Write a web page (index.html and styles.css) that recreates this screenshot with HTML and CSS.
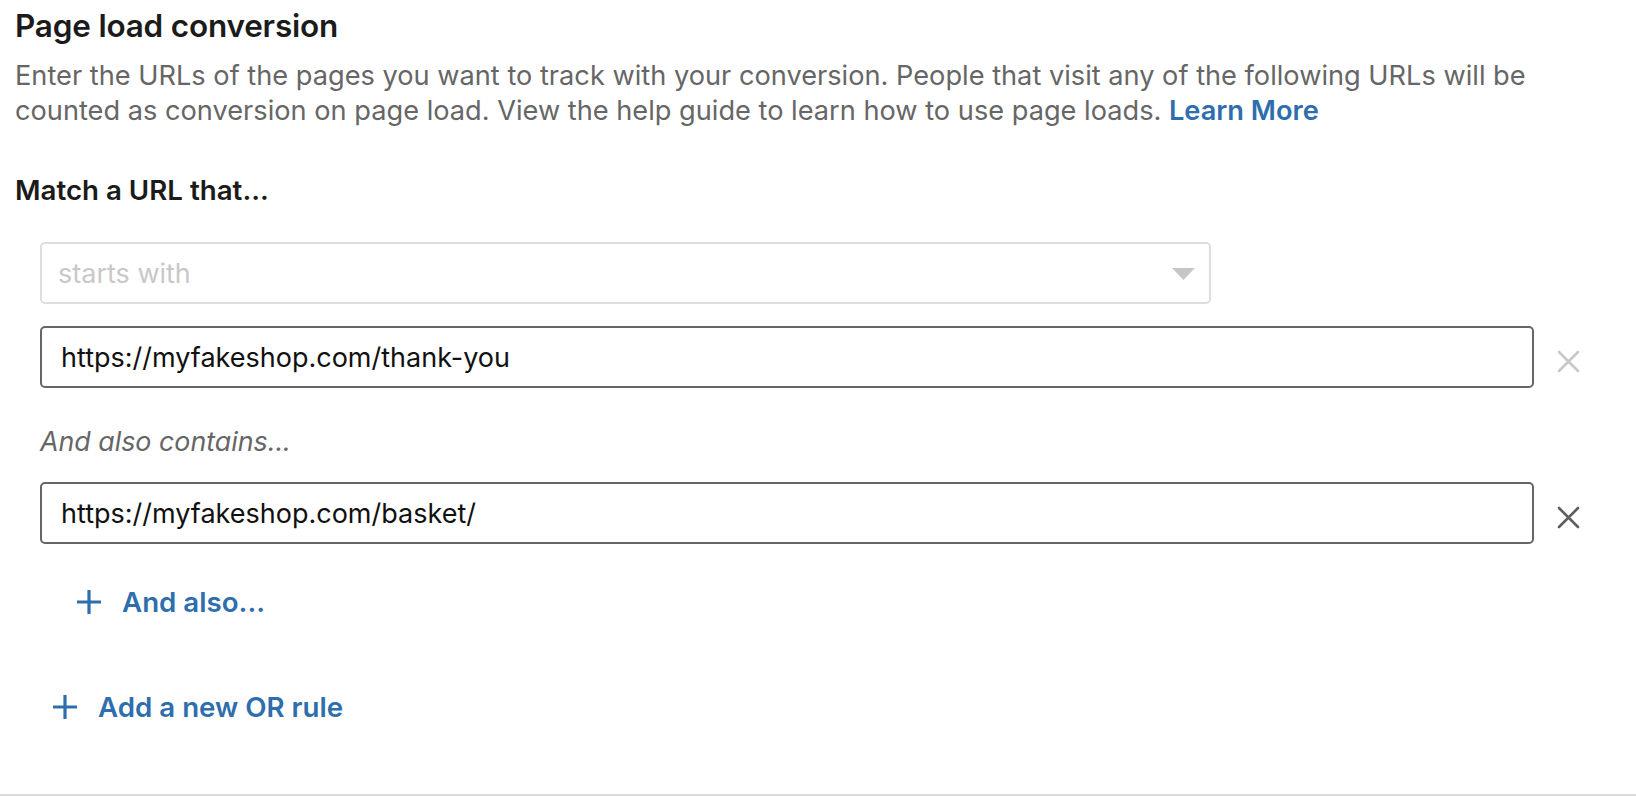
FILE: index.html
```html
<!DOCTYPE html>
<html lang="en">
<head>
<meta charset="utf-8">
<title>Page load conversion</title>
<link rel="stylesheet" href="styles.css">
</head>
<body>
<div class="panel">
  <h1 class="title">Page load conversion</h1>
  <p class="desc">Enter the URLs of the pages you want to track with your conversion. People that visit any of the following URLs will be counted as conversion on page load. View the help guide to learn how to use page loads. <a class="link" href="#">Learn More</a></p>
  <h2 class="subtitle">Match a URL that...</h2>
  <div class="rules">
    <div class="select">
      <span class="select-text">starts with</span>
      <svg class="caret" width="23" height="12" viewBox="0 0 23 12"><path d="M0 0H23L11.5 12Z" fill="#c6c6c6"/></svg>
    </div>
    <div class="row row-first">
      <div class="input">https://myfakeshop.com/thank-you</div>
      <svg class="close" width="23" height="23" viewBox="0 0 23 23"><path d="M2 2L21 21M21 2L2 21" stroke="#c8c8c8" stroke-width="2.6" stroke-linecap="round"/></svg>
    </div>
    <div class="label">And also contains...</div>
    <div class="row">
      <div class="input">https://myfakeshop.com/basket/</div>
      <svg class="close" width="23" height="23" viewBox="0 0 23 23"><path d="M2 2L21 21M21 2L2 21" stroke="#5e5e5e" stroke-width="2.6" stroke-linecap="round"/></svg>
    </div>
    <a class="action action-and" href="#">
      <svg class="plus" width="24" height="24" viewBox="0 0 24 24"><path d="M12 0V24M0 12H24" stroke="#2e6ead" stroke-width="3.2"/></svg>
      <span>And also...</span>
    </a>
  </div>
  <a class="action action-or" href="#">
    <svg class="plus" width="24" height="24" viewBox="0 0 24 24"><path d="M12 0V24M0 12H24" stroke="#2e6ead" stroke-width="3.2"/></svg>
    <span>Add a new OR rule</span>
  </a>
</div>
</body>
</html>
```

FILE: styles.css
```css
* { box-sizing: border-box; }

html, body {
  margin: 0;
  padding: 0;
  background: #ffffff;
}

body {
  font-family: Inter, "Noto Sans", "Liberation Sans", sans-serif;
  color: #1f1f1f;
}

.panel {
  height: 796px;
  padding: 7px 15px 0;
  border-bottom: 2px solid #dcdcdc;
  overflow: hidden;
}

.title {
  margin: 0;
  font-size: 31.5px;
  line-height: 38px;
  font-weight: 600;
  color: #1b1b1b;
  letter-spacing: -0.2px;
}

.desc {
  margin: 13px 0 0;
  font-size: 27.2px;
  line-height: 35px;
  color: #666666;
  max-width: 1560px;
}

.link {
  color: #2e6ead;
  font-weight: 600;
  text-decoration: none;
}

.subtitle {
  margin: 45px 0 0;
  font-size: 27.7px;
  line-height: 35px;
  font-weight: 600;
  color: #1b1b1b;
}

.rules {
  padding-left: 25px;
  margin-top: 34px;
}

.select {
  width: 1171px;
  height: 62px;
  border: 2px solid #dedede;
  border-radius: 5px;
  display: flex;
  align-items: center;
  justify-content: space-between;
  padding: 0 14px 0 16px;
}

.select-text {
  font-size: 27px;
  color: #c8c8c8;
}

.caret {
  display: block;
  margin-top: 2px;
}

.row {
  display: flex;
  align-items: center;
  gap: 23px;
  margin-top: 23px;
}

.row-first {
  margin-top: 22px;
}

.input {
  width: 1494px;
  height: 62px;
  border: 2px solid #666666;
  border-radius: 5px;
  display: flex;
  align-items: center;
  padding: 0 19px;
  font-size: 27px;
  color: #111111;
}

.close {
  display: block;
  margin-top: 8px;
}

.label {
  margin-top: 36px;
  font-size: 26.8px;
  line-height: 35px;
  font-style: italic;
  color: #666666;
}

.action {
  display: flex;
  align-items: center;
  height: 35px;
  font-size: 27.7px;
  font-weight: 600;
  color: #2e6ead;
  text-decoration: none;
}

.action .plus {
  display: block;
  flex: none;
}

.action-and {
  margin-top: 40px;
  padding-left: 37px;
  gap: 21px;
}

.action-or {
  margin-top: 70px;
  padding-left: 38px;
  gap: 21px;
}
```
